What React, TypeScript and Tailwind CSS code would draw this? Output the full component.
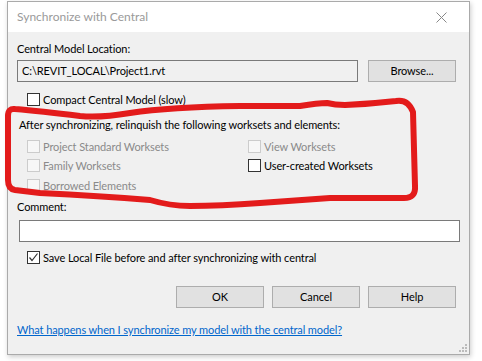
import React from 'react';

function Box({ checked = false, disabled = false }: { checked?: boolean; disabled?: boolean }) {
  return (
    <span
      className={
        'w-[13px] h-[13px] shrink-0 border flex items-center justify-center ' +
        (disabled ? 'border-[#cccccc] bg-[#f7f7f7]' : 'border-[#333333] bg-white')
      }
    >
      {checked && (
        <svg width="11" height="11" viewBox="0 0 11 11">
          <path d="M1.5 5.5 L4 8.5 L9.5 1.5" fill="none" stroke="#333" strokeWidth="1.2" />
        </svg>
      )}
    </span>
  );
}

function Check({ label, checked, disabled }: { label: string; checked?: boolean; disabled?: boolean }) {
  return (
    <label className="flex items-center gap-[3px] h-[19px]">
      <Box checked={checked} disabled={disabled} />
      <span className={disabled ? 'text-[#8a8a8a]' : 'text-black'}>{label}</span>
    </label>
  );
}

function Btn({ children }: { children: React.ReactNode }) {
  return (
    <button className="w-[88px] h-[22px] bg-[#e1e1e1] border border-[#adadad] text-black flex items-center justify-center">
      {children}
    </button>
  );
}

export default function App() {
  return (
    <div className="w-[482px] h-[361px] bg-white relative overflow-hidden font-['Lato',sans-serif] text-[11px] tracking-[-0.1px] leading-[16px] text-black">
      <div className="ml-[7px] mt-[1px] w-[463px] h-[354px] border border-[#aaaaaa] shadow-[1px_2px_5px_rgba(0,0,0,0.2)] flex flex-col">
        <div className="h-[30px] bg-white flex items-center justify-between pl-[9px] pr-[22px] text-[#9a9a9a] text-[12px] tracking-normal">
          <span>Synchronize with Central</span>
          <svg width="11" height="11" viewBox="0 0 11 11">
            <path d="M0.5 0.5 L10.5 10.5 M10.5 0.5 L0.5 10.5" stroke="#888" strokeWidth="1" />
          </svg>
        </div>
        <div className="flex-1 bg-[#f0f0f0] pl-[9px] pr-[9px] pt-[9px] flex flex-col relative">
          <div>Central Model Location:</div>
          <div className="flex mt-[3px] pr-[4px]">
            <div className="w-[342px] h-[22px] border border-[#7a7a7a] bg-[#f0f0f0] flex items-center pl-[4px]">
              C:\REVIT_LOCAL\Project1.rvt
            </div>
            <div className="ml-[10px]">
              <Btn>Browse...</Btn>
            </div>
          </div>
          <div className="mt-[8px] ml-[10px]">
            <Check label="Compact Central Model (slow)" />
          </div>
          <div className="mt-[8px] ml-[2px]">After synchronizing, relinquish the following worksets and elements:</div>
          <div className="mt-[4px] ml-[10px] grid grid-cols-[221px_1fr]">
            <Check label="Project Standard Worksets" disabled />
            <Check label="View Worksets" disabled />
            <Check label="Family Worksets" disabled />
            <Check label="User-created Worksets" />
            <div className="mt-[1px]">
              <Check label="Borrowed Elements" disabled />
            </div>
          </div>
          <div className="mt-[4px]">Comment:</div>
          <div className="mt-[5px] ml-[2px] h-[22px] border border-[#7a7a7a] bg-white" />
          <div className="mt-[6px] ml-[10px]">
            <Check label="Save Local File before and after synchronizing with central" checked />
          </div>
          <div className="mt-[19px] flex justify-end gap-[8px] pr-[4px]">
            <Btn>OK</Btn>
            <Btn>Cancel</Btn>
            <Btn>Help</Btn>
          </div>
          <a className="mt-[14px] text-[#0066cc] underline w-fit" href="#">
            What happens when I synchronize my model with the central model?
          </a>
          <svg className="absolute right-[2px] bottom-[2px]" width="8" height="8" viewBox="0 0 8 8">
            <rect x="6" y="0" width="2" height="2" fill="#bbb" />
            <rect x="3" y="3" width="2" height="2" fill="#bbb" />
            <rect x="6" y="3" width="2" height="2" fill="#bbb" />
            <rect x="0" y="6" width="2" height="2" fill="#bbb" />
            <rect x="3" y="6" width="2" height="2" fill="#bbb" />
            <rect x="6" y="6" width="2" height="2" fill="#bbb" />
          </svg>
        </div>
      </div>
      <svg className="absolute left-0 top-0 pointer-events-none" width="482" height="361" viewBox="0 0 482 361">
        <path
          d="M8 180 L8 116 Q8 108 15 109 Q40 111 80 116 Q100 118 130 113 Q170 107 240 106 L300 106 Q318 103 327 103 Q335 105 345 105 Q370 104 396 101 Q408 99 413 112 L415 186 Q416 198 404 198 L330 198 Q300 200 260 203 Q220 206 190 206 Q170 206 150 200 Q100 196 40 193 L15 190 Q8 189 8 180 Z"
          fill="none"
          stroke="#e31b1b"
          strokeWidth="6"
          strokeLinejoin="round"
        />
      </svg>
    </div>
  );
}
